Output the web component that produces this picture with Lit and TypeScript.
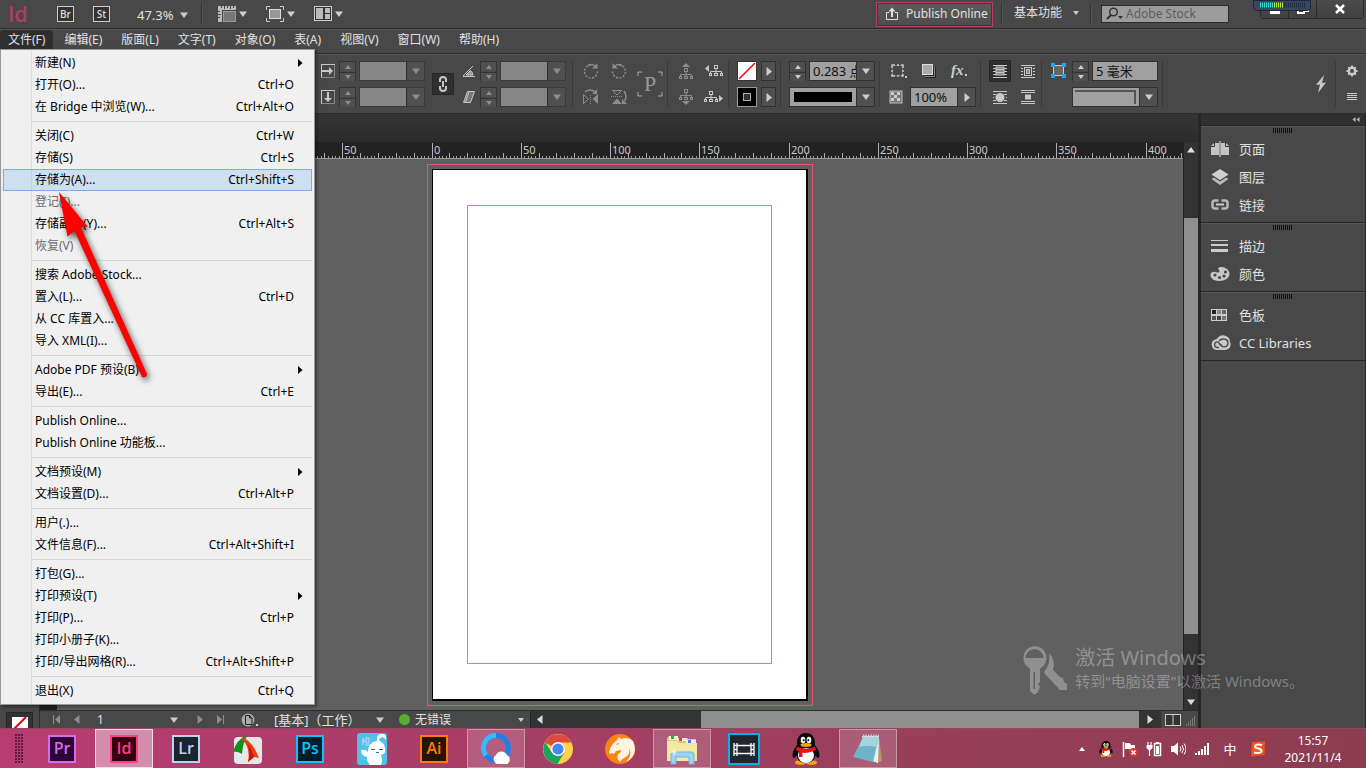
import { LitElement, html, svg, css, nothing, type TemplateResult } from 'lit';
import { customElement } from 'lit/decorators.js';
import { classMap } from 'lit/directives/class-map.js';

type MenuEntry = { label: string; keys?: string; sub?: boolean; off?: boolean; hot?: boolean };

const FILE_MENU: MenuEntry[][] = [
  [
    { label: '新建(N)', sub: true },
    { label: '打开(O)...', keys: 'Ctrl+O' },
    { label: '在 Bridge 中浏览(W)...', keys: 'Ctrl+Alt+O' },
  ],
  [
    { label: '关闭(C)', keys: 'Ctrl+W' },
    { label: '存储(S)', keys: 'Ctrl+S' },
    { label: '存储为(A)...', keys: 'Ctrl+Shift+S', hot: true },
    { label: '登记(I)...', off: true },
    { label: '存储副本(Y)...', keys: 'Ctrl+Alt+S' },
    { label: '恢复(V)', off: true },
  ],
  [
    { label: '搜索 Adobe Stock...' },
    { label: '置入(L)...', keys: 'Ctrl+D' },
    { label: '从 CC 库置入...' },
    { label: '导入 XML(I)...' },
  ],
  [
    { label: 'Adobe PDF 预设(B)', sub: true },
    { label: '导出(E)...', keys: 'Ctrl+E' },
  ],
  [{ label: 'Publish Online...' }, { label: 'Publish Online 功能板...' }],
  [
    { label: '文档预设(M)', sub: true },
    { label: '文档设置(D)...', keys: 'Ctrl+Alt+P' },
  ],
  [
    { label: '用户(.)...' },
    { label: '文件信息(F)...', keys: 'Ctrl+Alt+Shift+I' },
  ],
  [
    { label: '打包(G)...' },
    { label: '打印预设(T)', sub: true },
    { label: '打印(P)...', keys: 'Ctrl+P' },
    { label: '打印小册子(K)...' },
    { label: '打印/导出网格(R)...', keys: 'Ctrl+Alt+Shift+P' },
  ],
  [{ label: '退出(X)', keys: 'Ctrl+Q' }],
];

const MENUS = ['文件(F)', '编辑(E)', '版面(L)', '文字(T)', '对象(O)', '表(A)', '视图(V)', '窗口(W)', '帮助(H)'];

const icon = (w: number, h: number, body: TemplateResult | TemplateResult[]) =>
  html`<svg class="ico" width=${w} height=${h} viewBox="0 0 ${w} ${h}" aria-hidden="true">${body}</svg>`;

const TRI: Record<string, [number, number, string]> = {
  down: [8, 6, 'M0 0.5H8L4 6Z'],
  up: [8, 6, 'M0 5.5H8L4 0Z'],
  right: [6, 9, 'M0.5 0V9L6 4.5Z'],
  left: [6, 9, 'M5.5 0V9L0 4.5Z'],
  smallDown: [6, 4, 'M0 0H6L3 4Z'],
  smallUp: [6, 4, 'M0 4H6L3 0Z'],
};
const tri = (dir: string, color = '#ccc') => {
  const [w, h, d] = TRI[dir];
  return icon(w, h, svg`<path d=${d} fill=${color}/>`);
};

const G = '#c8c8c8';
const D = '#8c8c8c';

const tree = (c: string) => svg`<g fill="none" stroke=${c}><rect x="5.5" y="0.5" width="3" height="3"/><path d="M7 4V9M1.5 9V6.5H12.5V9"/><rect x="0.5" y="8.5" width="2" height="2"/><rect x="5.5" y="8.5" width="3" height="2"/><rect x="11.5" y="8.5" width="2" height="2"/></g>`;

const I = {
  scaleX: icon(16, 16, svg`<rect x="1.5" y="1.5" width="13" height="13" fill="none" stroke=${G} stroke-dasharray="1 1"/><path d="M1.500 2V14M1 1.500H15" stroke=${G}/><path d="M2 8H11" stroke=${G} stroke-width="2"/><path d="M9 4L13 8L9 12Z" fill=${G}/>`),
  scaleY: icon(16, 16, svg`<rect x="1.5" y="1.5" width="13" height="13" fill="none" stroke=${G} stroke-dasharray="1 1"/><path d="M1 1.5H15M1.5 1V15" stroke=${G}/><path d="M8 3V11" stroke=${G} stroke-width="2"/><path d="M4 9L8 13L12 9Z" fill=${G}/>`),
  angle: icon(16, 14, svg`<path d="M2 12L12 2M2 12.5H14" stroke=${G} fill="none"/><path d="M5 11L9.500 6.500A7 7 0 0 1 12 11Z" fill="#999" stroke=${G}/>`),
  shear: icon(16, 14, svg`<path d="M6.500 1.500H13.500L9.500 12.500H2.500Z" fill="#777" stroke=${G}/><path d="M8 1.500L4.500 12.500" stroke=${G}/>`),
  link: icon(10, 16, svg`<path d="M2 6V4A3 3 0 0 1 8 4V6M2 10V12A3 3 0 0 0 8 12V10" fill="none" stroke=${G} stroke-width="2"/><path d="M5 5V11" stroke=${G} stroke-width="2"/>`),
  cw: icon(18, 18, svg`<path d="M9 3A6.500 6.500 0 1 0 15.500 9.500" fill="none" stroke=${D} stroke-width="1.500" stroke-dasharray="2 1.500"/><path d="M6 3.500Q10 1.500 13 4" fill="none" stroke=${D} stroke-width="1.500"/><path d="M15.500 1V6.500H10Z" fill=${D}/>`),
  ccw: icon(18, 18, svg`<path d="M9 3A6.500 6.500 0 1 1 2.500 9.500" fill="none" stroke=${D} stroke-width="1.500" stroke-dasharray="2 1.500"/><path d="M12 3.500Q8 1.500 5 4" fill="none" stroke=${D} stroke-width="1.500"/><path d="M2.500 1V6.500H8Z" fill=${D}/>`),
  flipH: icon(18, 18, svg`<path d="M1.500 6.500V15.500L6.500 11Z" fill="none" stroke=${D}/><path d="M16 6V16L10.500 11Z" fill=${D}/><path d="M8.500 7V17" stroke=${D} stroke-dasharray="1 1"/><path d="M3 4Q8 0 13 4" fill="none" stroke=${D} stroke-width="1.500"/><path d="M15 1V6H10Z" fill=${D}/>`),
  flipV: icon(18, 18, svg`<path d="M2.500 2.500H11.500L7 7Z" fill="none" stroke=${D}/><path d="M2 16H12L7 10.500Z" fill=${D}/><path d="M1 8.500H13" stroke=${D} stroke-dasharray="1 1"/><path d="M14 3Q17.500 8 14.500 13" fill="none" stroke=${D} stroke-width="1.500"/><path d="M12 11V16H17Z" fill=${D}/>`),
  para: icon(26, 26, svg`<path d="M1 5V1H5M21 1H25V5M25 21V25H21M5 25H1V21" fill="none" stroke="#aaa"/><text x="13" y="20" text-anchor="middle" font-family="Liberation Serif, serif" font-size="22" fill="#999">P</text>`),
  treeUp: icon(16, 18, svg`<path d="M4 5L8 1L12 5Z" fill=${D}/><g transform="translate(1 6)">${tree(D)}</g>`),
  treeDown: icon(16, 18, svg`<path d="M4 13L8 17L12 13Z" fill=${D}/><g transform="translate(1 1)">${tree(D)}</g>`),
  treePrev: icon(20, 14, svg`<path d="M5 1V8L1 4.500Z" fill=${G}/><g transform="translate(5 1)">${tree(G)}</g>`),
  treeNext: icon(20, 14, svg`<path d="M15 5V12L19 8.500Z" fill=${G}/><g transform="translate(0 1)">${tree(G)}</g>`),
  none: icon(20, 20, svg`<rect x="0.500" y="0.500" width="19" height="19" fill="#fff" stroke="#333"/><path d="M2 18L18 2" stroke="#e00" stroke-width="1.500"/>`),
  stroke: icon(20, 20, svg`<rect x="0.500" y="0.500" width="19" height="19" fill="#000" stroke="#999"/><rect x="6.500" y="6.500" width="7" height="7" fill="#333" stroke="#aaa"/>`),
  corner: icon(18, 16, svg`<rect x="2.500" y="2.500" width="10" height="10" fill="none" stroke="#777" stroke-width="1"/><path d="M2 5V2H5M7 2H9M11 2H13V5M13 7V9M13 11V13H11M9 13H7M5 13H2V11M2 9V7" fill="none" stroke=${G} stroke-width="1.500"/><rect x="15" y="13" width="2" height="2" fill=${G}/>`),
  shadow: icon(16, 16, svg`<rect x="4" y="4" width="11" height="11" fill="#222"/><path d="M13.500 4V13.500H4" fill="none" stroke="#888"/><rect x="1.500" y="1.500" width="10" height="10" fill="#aaa" stroke="#ddd"/>`),
  fx: icon(18, 16, svg`<text x="1" y="12" font-family="Liberation Serif, serif" font-style="italic" font-weight="bold" font-size="15" fill="#d0d0d0">fx</text><rect x="15" y="11" width="2" height="2" fill=${G}/>`),
  checker: icon(14, 14, svg`<rect x="1" y="1" width="12" height="12" fill="#777" stroke="#bbb"/><path d="M2 2h3v3h-3zM8 2h3v3h-3zM5 5h3v3h-3zM2 8h3v3h-3zM8 8h3v3h-3z" fill="#ccc"/>`),
  wrap1: icon(16, 16, svg`<path d="M1 2.500H15M1 5.500H15M1 8.500H15M1 11.500H15M1 14.500H15" stroke=${G}/><rect x="4" y="4" width="8" height="8" fill="#888" stroke=${G}/><path d="M4 6.500H12M4 9.500H12" stroke=${G}/>`),
  wrap2: icon(16, 16, svg`<path d="M1 2.500H15M1 14.500H15M1 5.500H3M1 8.500H3M1 11.500H3M13 5.500H15M13 8.500H15M13 11.500H15" stroke=${G}/><rect x="4.500" y="4.500" width="7" height="8" fill="none" stroke=${G}/><rect x="6.500" y="6.500" width="3" height="4" fill="#888" stroke=${G}/>`),
  wrap3: icon(16, 16, svg`<path d="M1 2.500H15M1 14.500H15M1 5.500H4M1 8.500H2M1 11.500H4M12 5.500H15M14 8.500H15M12 11.500H15" stroke=${G}/><circle cx="8" cy="8.500" r="4.500" fill=${G}/>`),
  wrap4: icon(16, 16, svg`<path d="M1 1.500H15M1 3.500H15M1 12.500H15M1 14.500H15" stroke=${G}/><rect x="5" y="5.500" width="6" height="5" fill=${G}/>`),
  frame: icon(18, 18, svg`<rect x="3.500" y="3.500" width="10" height="10" fill="#666" stroke=${G}/><path d="M1 1h4v4h-4zM12 1h4v4h-4zM1 12h4v4h-4zM12 12h4v4h-4z" fill="#29a3f0"/>`),
  bolt: icon(12, 20, svg`<path d="M9 1L1 11L5 10.500L3 19L11 8.500L7 9Z" fill=${G}/>`),
  gear: icon(12, 12, svg`<circle cx="6" cy="6" r="3.200" fill="none" stroke=${G} stroke-width="2.400"/><path d="M6 0.500V2M6 10V11.500M0.500 6H2M10 6H11.500M2.200 2.200L3.300 3.300M8.700 8.700L9.800 9.800M9.800 2.200L8.700 3.300M3.300 8.700L2.200 9.800" stroke=${G} stroke-width="2"/>`),
  lines: icon(12, 10, svg`<path d="M1 1.500H11M1 3.500H11M1 5.500H11M1 7.500H11" stroke=${G}/>`),
  rulers: icon(18, 16, svg`<path d="M0 0h18v4h-14v12h-4z" fill="#bbb"/><path d="M3.500 0v2M6.500 0v3M9.500 0v2M12.500 0v3M15.500 0v2M0 5.500h2M0 8.500h3M0 11.500h2" stroke="#444"/><rect x="5.500" y="5.500" width="12" height="10" fill="#777" stroke="#999"/>`),
  screen: icon(18, 16, svg`<rect x="3.500" y="3.500" width="11" height="9" fill="#999" stroke="#ddd"/><path d="M0.500 4V0.500H4M14 0.500H17.500V4M17.500 12V15.500H14M4 15.500H0.500V12" fill="none" stroke="#ccc"/>`),
  arrange: icon(18, 16, svg`<rect x="0.500" y="0.500" width="17" height="14" fill="#333" stroke="#ccc"/><rect x="2" y="2" width="7" height="11" fill="#bbb"/><rect x="11" y="2" width="5" height="5" fill="#bbb"/><rect x="11" y="8" width="5" height="5" fill="#bbb"/>`),
  upload: icon(14, 14, svg`<path d="M4 5.500H1.500V12.500H12.500V5.500H10" fill="none" stroke="#ddd"/><path d="M7 10V3" stroke="#ddd" stroke-width="2"/><path d="M3.500 4.500L7 0.500L10.500 4.500Z" fill="#ddd"/>`),
  search: icon(20, 14, svg`<circle cx="7.500" cy="5" r="3.800" fill="none" stroke="#333" stroke-width="1.500"/><path d="M5 8L1 12" stroke="#333" stroke-width="2"/><path d="M12 9H17L14.500 12Z" fill="#333"/>`),
};

const PANELS: { label: string; glyph: TemplateResult }[][] = [
  [
    { label: '页面', glyph: icon(20, 18, svg`<path d="M1 6L4 3H9V15H1ZM11 3H16L19 6V15H11Z" fill="#c4c4c4"/><path d="M1 6.500H4.500V3M19 6.500H15.500V3" fill="none" stroke="#333"/><path d="M10 1V17" stroke="#eee"/>`) },
    { label: '图层', glyph: icon(20, 18, svg`<path d="M10 1L18.500 6.500L10 12L1.500 6.500Z" fill="#d0d0d0"/><path d="M1.500 11L4 9.500L10 13.500L16 9.500L18.500 11L10 17Z" fill="#b8b8b8"/>`) },
    { label: '链接', glyph: icon(20, 18, svg`<path d="M8.500 4.500H5Q2.500 4.500 2.500 7V10Q2.500 12.500 5 12.500H8.500M11.500 4.500H15Q17.500 4.500 17.500 7V10Q17.500 12.500 15 12.500H11.500" fill="none" stroke="#b8b8b8" stroke-width="2.500"/><path d="M6 8.500H14" stroke="#ccc" stroke-width="2"/>`) },
  ],
  [
    { label: '描边', glyph: icon(20, 18, svg`<path d="M1 3.500H18" stroke="#ccc"/><path d="M1 8H18" stroke="#ccc" stroke-width="2"/><path d="M1 13.500H18" stroke="#ccc" stroke-width="3"/>`) },
    { label: '颜色', glyph: icon(20, 18, svg`<path d="M11 2C17 2 19.500 6 19.500 9C19.500 13 15 16 9 16C4 16 0.500 13 0.500 10C0.500 7 4 6 7 7.500C10 8 10 6 8.500 4.500C7.500 3 9 2 11 2Z" fill="#c8c8c8"/><g fill="#444"><circle cx="5" cy="10" r="1.600"/><circle cx="9.500" cy="12.500" r="1.600"/><circle cx="14" cy="11" r="1.600"/><circle cx="15.500" cy="7" r="1.600"/></g>`) },
  ],
  [
    { label: '色板', glyph: icon(20, 18, svg`<rect x="1" y="3" width="16" height="12" fill="#ccc"/><path d="M2 4h4v4h-4z" fill="#222"/><path d="M7 4h4v4h-4z" fill="#888"/><path d="M12 4h4v4h-4z" fill="#666"/><path d="M2 10h4v4h-4z" fill="#555"/><path d="M7 10h4v4h-4z" fill="#444"/><path d="M12 10h4v4h-4z" fill="#777"/>`) },
    { label: 'CC Libraries', glyph: icon(22, 18, svg`<path d="M7 16A5.500 5.500 0 0 1 4 6C6 5 7 5 8 3.500A7 7 0 0 1 20 8C22 12 19 16 15 16Z" fill="#c8c8c8"/><path d="M13 13L8 8A2.800 2.800 0 1 0 7 13.500H9M9 7C12 3.500 18 5 18 9C18 13 13.500 14 11 11.500L9 9.500" fill="none" stroke="#444" stroke-width="1.300"/>`) },
  ],
];

const adobe = (t: string, edge: string, bg: string) =>
  icon(30, 30, svg`<rect x="2" y="2" width="26" height="26" fill=${bg} stroke=${edge} stroke-width="2"/><text x="15" y="20" text-anchor="middle" font-family="Open Sans, sans-serif" font-weight="600" font-size="16" fill=${edge}>${t}</text>`);

const qq = (s: number) => html`<svg class="ico" width=${s} height=${s} viewBox="0 0 32 32" aria-hidden="true">
  <ellipse cx="10.500" cy="29.500" rx="5.500" ry="2.300" fill="#f6a800"/><ellipse cx="21.500" cy="29.500" rx="5.500" ry="2.300" fill="#f6a800"/>
  <path d="M16 0C22 0 25.500 4.500 25 12C28 16 31 22 28.500 25C27 25 26 23 25.500 22C25 27 21 30 16 30C11 30 7 27 6.500 22C6 23 5 25 3.500 25C1 22 4 16 7 12C6.500 4.500 10 0 16 0Z" fill="#0b0b0b"/>
  <ellipse cx="16" cy="22.500" rx="8" ry="7.500" fill="#fff"/><ellipse cx="13" cy="7" rx="2.300" ry="3.200" fill="#fff"/><ellipse cx="19" cy="7" rx="2.300" ry="3.200" fill="#fff"/><circle cx="13.700" cy="7.300" r="1"/><circle cx="18.300" cy="7.300" r="1"/>
  <ellipse cx="16" cy="12" rx="5.500" ry="1.900" fill="#f6a800"/><path d="M7 13.500Q16 18 25 13.500L26 17Q16 21 12.500 19.500V24H9V18.500L6 17Z" fill="#e8141c"/></svg>`;

const APPS: { name: string; state?: string; glyph: TemplateResult }[] = [
  { name: 'Premiere Pro', glyph: adobe('Pr', '#d869f5', '#2a0634') },
  { name: 'InDesign', state: 'active', glyph: adobe('Id', '#ff3c8e', '#34000f') },
  { name: 'Lightroom', glyph: adobe('Lr', '#b4d4f0', '#1c2430') },
  { name: 'FastStone', glyph: icon(30, 32, svg`<rect x="1" y="4" width="28" height="27" rx="4" fill="#e6e6e6"/><path d="M0 19Q3 7 15 1L13 5Q10 10 9 21Q5 18 0 19Z" fill="#149018"/><path d="M8 5Q18 5 26 25L21 24L15 29Q18 14 8 5Z" fill="#ee3c18"/><path d="M8 5Q20 14 15 29L21 24L17 14Z" fill="#d01208"/>`) },
  { name: 'Photoshop', glyph: adobe('Ps', '#00c8ff', '#001d2c') },
  { name: 'Pet', glyph: icon(32, 34, svg`<rect x="1" y="1" width="30" height="32" rx="3" fill="#52c0e8"/><path d="M21 9Q20 2 26 2Q31 2 30 8Q28 4 24 6Q23 7 23.500 9Q29 11 29 17Q30 22 25 23Q27 29 25 33H14Q10 29 11 25Q5 24 5 18Q9 17 12 20Q12 10 21 9Z" fill="#fff"/><path d="M15 17.500h4M23 17.500h4M20 20.500h3" stroke="#46a" fill="none"/><path d="M7 6v7M10 6v5h3V6zM6 9h3M9 13h5" stroke="#cdf" fill="none"/>`) },
  { name: 'Illustrator', glyph: adobe('Ai', '#ff7c00', '#261300') },
  { name: 'QQ Browser', state: 'open', glyph: icon(32, 34, svg`<circle cx="16" cy="16" r="12.500" fill="none" stroke="#1c80ea" stroke-width="5"/><path d="M6 23.500A12.500 12.500 0 0 1 16 3.500" fill="none" stroke="#38b8ff" stroke-width="5"/><path d="M17 32A5 5 0 0 1 16 23A6 6 0 0 1 27 23A5 5 0 0 1 27 32Z" fill="#fff"/>`) },
  { name: 'Chrome', glyph: icon(32, 32, svg`<circle cx="16" cy="16" r="15" fill="#fdd14a"/><path d="M16 16L2.600 9.500A15 15 0 0 1 29.500 9.500H16Z" fill="#dd4b3e"/><path d="M3 9A15 15 0 0 0 15.500 31L22 20L16 16L9.500 19Z" fill="#1aa260"/><circle cx="16" cy="16" r="7" fill="#fff"/><circle cx="16" cy="16" r="5.600" fill="#4a86f0"/>`) },
  { name: 'UC Browser', glyph: icon(32, 32, svg`<circle cx="16" cy="16" r="15" fill="#f98412"/><path d="M5 19Q7 11 13 7L15 4L17 6Q24 3 29 8Q31 12 31 17Q30 25 22 29Q29 21 25 15Q27 22 20 25Q16 27 17 29Q12 27 14 21Q17 20 17 17L12 18L10 21L8 20L6 21Z" fill="#fff3e2"/><path d="M12 11L15 10L14 12Z" fill="#f98412"/>`) },
  { name: 'File Explorer', state: 'open', glyph: icon(34, 32, svg`<path d="M2 5L4 3H12L13 5H22L23 6H31V28H2Z" fill="#d8c878"/><path d="M4 3h9v4h-9zM12 5h10v3h-10zM21 7h10v3h-10z" fill="#f4f0d8"/><path d="M6 3h3v3h-3z" fill="#28b040"/><path d="M14 5h3v3h-3z" fill="#d84030"/><path d="M23 7h3v3h-3z" fill="#3a86d8"/><path d="M2 8H12L14 10H32V28H2Z" fill="#f4e8a0"/><path d="M6 31V22Q6 19 9 19H26Q29 19 29 22V31H24V24H11V31Z" fill="#9ad4f0" stroke="#70b4dc"/><path d="M9 16v6M6 19h6" stroke="#fff"/>`) },
  { name: 'Media', glyph: icon(32, 32, svg`<rect x="1" y="1" width="30" height="30" fill="#20262c" stroke="#08b0e4" stroke-width="2"/><path d="M6 10V23M9 10V23M23 10V23M26 10V23M6 12.500h3M6 16.500h3M6 20.500h3M23 12.500h3M23 16.500h3M23 20.500h3M9 12.500H23M9 20.500H23" stroke="#fff" stroke-width="1.300"/>`) },
  { name: 'QQ', glyph: qq(32) },
  { name: 'Notepad', state: 'open', glyph: icon(34, 32, svg`<path d="M28 4L31 28L25 30Z" fill="#b89a68"/><path d="M11 3H28L27 30L21 28Z" fill="#e8f0f0"/><path d="M12 4H28L22 29L2 24Z" fill="#6cb4c6"/><path d="M12 4H28L25 14Q16 12 8 14Z" fill="#a4d4de"/><path d="M12 3H28" stroke="#ccc" stroke-width="3" stroke-dasharray="1.500 1"/>`) },
];

const ORIGIN = 375;
const STEP = 17.85;

@customElement('app-root')
export class AppRoot extends LitElement {
  static styles = css`
    :host { display: flex; flex-direction: column; height: 100vh; overflow: hidden; position: relative; background: #484848; color: #e0e0e0; font: 12px/16px 'Noto Sans', 'Noto Sans CJK SC', sans-serif; }
    * { box-sizing: border-box; }
    button, input, select { font: inherit; color: inherit; margin: 0; padding: 0; border: 0; background: none; border-radius: 0; outline: 0; }
    select { appearance: none; }
    .ico { display: block; flex: none; }
    .row { display: flex; align-items: center; }
    .grow { flex: 1; }
    .sel { display: inline-grid; align-items: center; }
    .sel > * { grid-area: 1 / 1; }
    .sel > .ico { justify-self: end; pointer-events: none; }
    .vr { width: 2px; align-self: stretch; background: #333; border-right: 1px solid #555; }

    .title { height: 29px; flex: none; border-bottom: 1px solid #2c2c2c; padding-left: 8px; }
    .brand { width: 49px; color: #b23c6e; font: 600 21px/28px 'Open Sans', sans-serif; }
    .mini { width: 17px; height: 16px; border: 1px solid #ccc; background: #333; color: #ddd; font: 600 10px/14px 'Open Sans', sans-serif; text-align: center; margin-right: 19px; }
    .zoom { width: 51px; margin: 2px 13px 0 8px; font-size: 13px; }
    .title > .vr { margin: 4px 0; }
    .drop { display: flex; align-items: center; gap: 3px; height: 20px; }
    .views { display: flex; gap: 19px; margin-left: 15px; }
    .publish { display: flex; align-items: center; gap: 7px; width: 117px; height: 25px; padding-left: 8px; border: 1px solid #b8406e; background: linear-gradient(#5c5c5c, #4c4c4c); box-shadow: inset 0 0 0 1px #3a3a3a; margin-right: 8px; white-space: nowrap; }
    .space { width: 65px; margin: 0 11px 2px 11px; }
    .find { display: flex; align-items: center; width: 128px; height: 18px; margin: 0 31px 1px 9px; border: 1px solid #2c2c2c; background: #9c9c9c; padding-left: 4px; }
    .find input { width: 100%; min-width: 0; color: #333; }
    .find input::placeholder { color: #5c5c5c; opacity: 1; }
    .wins { display: flex; align-self: flex-start; height: 19px; margin-right: 2px; border: 1px solid #2a2a2a; border-top: 0; border-radius: 0 0 4px 4px; }
    .wins button { width: 28px; display: grid; place-items: center; border-right: 1px solid #2a2a2a; background: linear-gradient(#4c4c4c, #404040); }
    .wins button:last-child { width: 46px; border: 0; }
    .meter { position: absolute; top: 0; right: 55px; width: 58px; height: 11px; border: 1px solid #20283c; border-radius: 0 0 4px 4px; background: #3a4560; padding: 1px 6px; }

    .menubar { display: flex; gap: 3px; height: 24px; flex: none; border-top: 1px solid #585858; padding-bottom: 3px; }
    .menubar button { padding: 0 8px; height: 20px; }
    .menubar button.on { background: #2e2e2e; border-radius: 3px 3px 0 0; }

    .control { display: flex; align-items: stretch; height: 61px; flex: none; border-top: 1px solid #2c2c2c; border-bottom: 1px solid #2c2c2c; box-shadow: inset 0 1px #585858; padding: 7px 2px 6px 320px; }
    .cg { display: flex; align-items: center; padding-right: 4px; }
    .cg:first-child { padding-right: 6px; }
    .vr + .cg, .grow + .cg { padding-left: 8px; }
    .control > .vr { width: 1px; border: 0; background: #3a3a3a; }
    .two { display: grid; grid-template-rows: 20px 20px; row-gap: 6px; }
    .line { display: flex; align-items: center; }
    .g3 { gap: 3px; }
    .g4 { gap: 4px; }
    .g6 { gap: 6px; }
    .g8 { gap: 8px; }
    .cell { display: grid; place-items: center; height: 20px; }
    .w16 { width: 16px; }
    .w18 { width: 18px; }
    .w20 { width: 20px; }
    .w22 { width: 22px; }
    .spin { display: grid; grid-template-rows: 10px 10px; width: 17px; border: 1px solid #333; height: 20px; }
    .spin button { display: grid; place-items: center; height: 9px; background: #505050; }
    .spin button + button { border-top: 1px solid #333; }
    .field { display: flex; width: 66px; height: 20px; border: 1px solid #303030; background: #a0a0a0; color: #111; }
    .field.dim { background: #868686; border-color: #3a3a3a; }
    .field input { flex: 1; width: 0; min-width: 0; padding-left: 3px; font-size: 13px; }
    .field button { width: 18px; display: grid; place-items: center; background: #505050; border-left: 1px solid #303030; }
    .wide { width: 86px; }
    .sample { flex: 1; margin: 4px; background: #000; }
    .bend { flex: 1; margin: 2px 3px 2px 2px; border-top: 2px solid #555; border-right: 2px solid #555; }
    .tog { display: grid; place-items: center; width: 22px; height: 22px; background: #303030; border: 1px solid #262626; }
    .gap7 { gap: 7px; }
    .play { width: 15px; height: 20px; display: grid; place-items: center; border: 1px solid #303030; background: #505050; }

    .work { display: flex; flex: 1; min-height: 0; }
    .tools { width: 40px; flex: none; display: flex; flex-direction: column; justify-content: flex-end; border-right: 1px solid #2c2c2c; overflow: hidden; padding: 0 6px; }
    .fill { height: 16px; width: 27px; padding: 4px 5px 0; background: #333; border: 1px solid #262626; border-bottom: 0; overflow: hidden; }
    .doc { display: flex; flex-direction: column; flex: 1; min-width: 0; }
    .tabs { height: 28px; flex: none; background: linear-gradient(#353535, #2b2b2b); }
    .view { flex: 1; min-height: 0; display: grid; grid-template: 17px minmax(0, 1fr) / 17px minmax(0, 1fr) 15px; }
    .ruler { background: #222; overflow: hidden; }
    .ruler svg { display: block; width: 100%; height: 100%; }
    .canvas { background: #606060; display: grid; place-items: center; overflow: hidden; }
    .bleed { border: 1px solid #f05468; padding: 4px; }
    .page { width: 376px; height: 532px; background: #fff; border: 1px solid #000; border-width: 1px 2px 2px 1px; padding: 35px 34px; }
    .margin { height: 100%; border: 1px solid #cc7eb4; }
    .vbar { display: flex; flex-direction: column; grid-row: 1 / 3; grid-column: 3; background: #333; border-left: 1px solid #222; }
    .vbar button, .hbar button { display: grid; place-items: center; flex: none; }
    .vbar button { height: 16px; }
    .gap { background: #333; }
    .thumb { background: #8f8f8f; }
    .f60 { flex: 60; }
    .f415 { flex: 415; }
    .f152 { flex: 152; }
    .f438 { flex: 438; }

    .status { display: flex; align-items: center; height: 18px; flex: none; border-top: 1px solid #2c2c2c; padding-left: 7px; }
    .nav { display: grid; place-items: center; width: 20px; }
    .pageno { width: 91px; padding-left: 10px; margin-right: 12px; }
    .note { display: flex; width: 27px; margin: 0 6px 0 11px; }
    .profile { width: 110px; margin-right: 15px; }
    .profile select { font-size: 13px; }
    .dot { width: 11px; height: 11px; border-radius: 50%; background: #58ae2c; margin-right: 5px; }
    .errs { width: 109px; margin-right: 6px; }
    .hbar { display: flex; flex: 1; align-self: stretch; background: #333; border-left: 1px solid #222; }
    .hbar button { width: 18px; }
    .hbar button:last-child { width: 22px; }
    .ends { display: flex; align-items: center; gap: 5px; padding: 0 2px 0 4px; }

    .panels { width: 168px; flex: none; border: solid #262626; border-width: 0 1px 0 3px; }
    .collapse { height: 12px; display: flex; align-items: center; justify-content: flex-end; padding-right: 5px; background: #303030; border-bottom: 1px solid #262626; }
    .pg { border-top: 1px solid #585858; border-bottom: 1px solid #262626; padding: 1px 0 3px; }
    .grip { width: 20px; height: 5px; margin: 0 auto 2px; background: repeating-linear-gradient(90deg, #111 0 1px, #484848 1px 2px); }
    .pi { display: flex; align-items: center; width: 100%; height: 28px; gap: 9px; padding-left: 9px; font-size: 13px; text-align: left; }
    .pi > span { width: 20px; }

    .taskbar { display: flex; height: 40px; flex: none; align-items: stretch; background: linear-gradient(90deg, #b83c72, #a03f61 50%, #8c3c50); border-top: 1px solid #99445f; color: #fff; }
    .tgrip { width: 8px; margin: 5px 10px 4px 15px; background: radial-gradient(circle at 1px 1px, #5c1c38 1px, transparent 1px) 0 0 / 3px 3px; }
    .apps { display: flex; gap: 4px; }
    .apps button { width: 58px; display: grid; place-items: center; border: 1px solid transparent; }
    .apps .open { background: rgba(255, 255, 255, 0.16); border-color: rgba(255, 255, 255, 0.35); }
    .apps .active { background: rgba(255, 255, 255, 0.42); border-color: #f4dce6; }
    .tray { display: flex; align-items: center; gap: 8px; margin-right: 18px; }
    .tray button { display: grid; place-items: center; width: 16px; height: 24px; }
    .tray .ime { font-size: 13px; margin: 0 4px; }
    .clock { width: 70px; text-align: center; margin-left: 4px; line-height: 17px; }

    .menu { position: absolute; top: 49px; left: 0; width: 315px; padding: 2px; border: 1px solid #989898; background: linear-gradient(90deg, transparent 30px, #dcdcdc 30px 31px, transparent 31px) #f0f0f0; color: #000; box-shadow: 2px 2px 3px rgba(0, 0, 0, 0.4); }
    .menu hr { height: 1px; border: 0; margin: 3px 0 3px 28px; background: #d7d7d7; }
    .mi { display: flex; justify-content: space-between; align-items: center; width: 100%; height: 22px; padding: 0 17px 0 31px; border: 1px solid transparent; white-space: nowrap; }
    .mi.off { color: #6d6d6d; }
    .mi.hot { background: rgba(120, 180, 240, 0.28); border-color: #78aee5; }
    .mi .ico { margin-right: -9px; }

    .pointer { position: absolute; left: 50px; top: 185px; filter: drop-shadow(2px 3px 3px rgba(0, 0, 0, 0.65)); pointer-events: none; }
    .mark { position: absolute; right: 62px; bottom: 71px; display: flex; gap: 6px; color: rgba(255, 255, 255, 0.33); pointer-events: none; white-space: nowrap; }
    .mark p { margin: 0; }
    .mark .big { font-size: 20px; line-height: 26px; }
    .mark .small { font-size: 15px; line-height: 20px; }
  `;

  private sep = () => html`<span class="vr"></span>`;

  private spin(label: string, c = '#ccc') {
    return html`<span class="spin"><button aria-label="${label} +">${tri('smallUp', c)}</button><button aria-label="${label} -">${tri('smallDown', c)}</button></span>`;
  }

  private field(label: string, value = '', dim = false, arrow = 'down') {
    return html`<span class=${classMap({ field: true, dim })}><input aria-label=${label} .value=${value} ?disabled=${dim}>${arrow ? html`<button aria-label="${label} ▾">${tri(arrow, dim ? '#8c8c8c' : '#ccc')}</button>` : nothing}</span>`;
  }

  private cell(glyph: TemplateResult, label: string, cls = 'w20') {
    return html`<button class="cell ${cls}" aria-label=${label}>${glyph}</button>`;
  }

  private hRuler() {
    const out: TemplateResult[] = [];
    for (let i = -21; i <= 44; i++) {
      const x = Math.floor(ORIGIN + i * STEP) + 0.5;
      const major = i % 5 === 0;
      out.push(svg`<path d="M${x} ${major ? 1 : 11}V16" stroke="#b0b0b0"/>`);
      for (let k = 1; k < 5; k++) out.push(svg`<path d="M${Math.floor(ORIGIN + (i + k / 5) * STEP) + 0.5} 14V16" stroke="#9a9a9a"/>`);
      if (major) out.push(svg`<text x=${x + 1.5} y="12" font-size="11" fill="#c8c8c8">${Math.abs(i * 10)}</text>`);
    }
    return html`<svg aria-hidden="true">${out}<path d="M0 16.500H2000" stroke="#999"/></svg>`;
  }

  private titleBar() {
    return html`<header class="title row">
      <span class="brand">Id</span>
      <button class="mini">Br</button><button class="mini">St</button>
      <label class="sel zoom"><select aria-label="缩放"><option>47.3%</option></select>${tri('down')}</label>
      ${this.sep()}
      <div class="views">
        <button class="drop" aria-label="视图选项">${I.rulers}${tri('down')}</button>
        <button class="drop" aria-label="屏幕模式">${I.screen}${tri('down')}</button>
        <button class="drop" aria-label="排列文档">${I.arrange}${tri('down')}</button>
      </div>
      <span class="grow"></span>
      <button class="publish">${I.upload}Publish Online</button>
      ${this.sep()}
      <label class="sel space"><select aria-label="工作区"><option>基本功能</option></select>${tri('smallDown')}</label>
      ${this.sep()}
      <label class="find">${I.search}<input aria-label="Adobe Stock" placeholder="Adobe Stock"></label>
      <div class="wins">
        <button aria-label="最小化">${icon(12, 14, svg`<rect x="1" y="9" width="10" height="3" fill="#fff"/>`)}</button>
        <button aria-label="还原">${icon(14, 14, svg`<path d="M5 3h7v6h-3M2 6h6v5h-6z" fill="none" stroke="#fff" stroke-width="2"/>`)}</button>
        <button aria-label="关闭">${icon(12, 12, svg`<path d="M2 2L10 10M10 2L2 10" stroke="#fff" stroke-width="2.500"/>`)}</button>
      </div>
      <div class="meter">${icon(48, 6, svg`<path d="M0 3H14" stroke="#30e0d0" stroke-width="5" stroke-dasharray="1 1"/><path d="M14 3H24" stroke="#c0e830" stroke-width="5" stroke-dasharray="1 1"/><path d="M24 3H46" stroke="#222c44" stroke-width="5" stroke-dasharray="1 1"/>`)}</div>
    </header>`;
  }

  private controlBar() {
    return html`<section class="control">
      <div class="cg gap7">
        <div class="two">
          <div class="line g3">${this.cell(I.scaleX, 'X 缩放', 'w16')}${this.spin('X 缩放', '#8c8c8c')}${this.field('X 缩放百分比', '', true)}</div>
          <div class="line g3">${this.cell(I.scaleY, 'Y 缩放', 'w16')}${this.spin('Y 缩放', '#8c8c8c')}${this.field('Y 缩放百分比', '', true)}</div>
        </div>
        <button class="tog" aria-label="约束缩放比例">${I.link}</button>
        <div class="two">
          <div class="line g3">${this.cell(I.angle, '旋转', 'w16')}${this.spin('旋转', '#8c8c8c')}${this.field('旋转角度', '', true)}</div>
          <div class="line g3">${this.cell(I.shear, '切变', 'w16')}${this.spin('切变', '#8c8c8c')}${this.field('切变角度', '', true)}</div>
        </div>
      </div>${this.sep()}
      <div class="cg g8">
        <div class="two">
          <div class="line g8">${this.cell(I.cw, '顺时针旋转')}${this.cell(I.ccw, '逆时针旋转')}</div>
          <div class="line g8">${this.cell(I.flipH, '水平翻转')}${this.cell(I.flipV, '垂直翻转')}</div>
        </div>${I.para}
      </div>${this.sep()}
      <div class="cg"><div class="two">
        <div class="line g8">${this.cell(I.treeUp, '选择容器')}${this.cell(I.treePrev, '上一对象', 'w20')}</div>
        <div class="line g8">${this.cell(I.treeDown, '选择内容')}${this.cell(I.treeNext, '下一对象', 'w20')}</div>
      </div></div>${this.sep()}
      <div class="cg"><div class="two">
        <div class="line g4">${this.cell(I.none, '填色')}<button class="play" aria-label="填色选项">${tri('right')}</button></div>
        <div class="line g4">${this.cell(I.stroke, '描边')}<button class="play" aria-label="描边选项">${tri('right')}</button></div>
      </div></div>${this.sep()}
      <div class="cg"><div class="two">
        <div class="line g3">${this.spin('粗细')}${this.field('描边粗细', '0.283 点')}</div>
        <span class="field wide"><span class="sample"></span><button aria-label="描边类型">${tri('down')}</button></span>
      </div></div>${this.sep()}
      <div class="cg"><div class="two">
        <div class="line g8">${this.cell(I.corner, '角选项', 'w22')}${this.cell(I.shadow, '投影', 'w22')}${this.cell(I.fx, '效果', 'w22')}</div>
        <div class="line g6">${this.cell(I.checker, '不透明度', 'w16')}${this.field('不透明度百分比', '100%', false, 'right')}</div>
      </div></div>${this.sep()}
      <div class="cg"><div class="two">
        <div class="line g8"><button class="tog" aria-label="无文本绕排">${I.wrap1}</button>${this.cell(I.wrap2, '定界框绕排', 'w18')}</div>
        <div class="line g8">${this.cell(I.wrap3, '对象形状绕排', 'w22')}${this.cell(I.wrap4, '上下型绕排', 'w18')}</div>
      </div></div>${this.sep()}
      <div class="cg g4">
        <div class="two">${this.cell(I.frame, '角', 'w18')}</div>
        <div class="two">
          <div class="line g3">${this.spin('角大小')}${this.field('角大小值', '5 毫米', false, '')}</div>
          <span class="field wide"><span class="bend"></span><button aria-label="角形状">${tri('down')}</button></span>
        </div>
      </div>${this.sep()}
      <span class="grow"></span>
      <div class="cg">${this.cell(I.bolt, '快速应用', 'w20')}</div>${this.sep()}
      <div class="cg"><div class="two">${this.cell(I.gear, '设置', 'w16')}${this.cell(I.lines, '面板菜单', 'w16')}</div></div>
    </section>`;
  }

  private statusBar() {
    return html`<footer class="status">
      <button class="nav" aria-label="第一页">${icon(8, 9, svg`<path d="M0.500 0V9" stroke=${D}/><path d="M7 0V9L2 4.500Z" fill=${D}/>`)}</button>
      <button class="nav" aria-label="上一页">${tri('left', D)}</button>
      <label class="sel pageno"><select aria-label="页码"><option>1</option></select>${tri('down')}</label>
      <button class="nav" aria-label="下一页">${tri('right', D)}</button>
      <button class="nav" aria-label="最后一页">${icon(8, 9, svg`<path d="M7.500 0V9" stroke=${D}/><path d="M1 0V9L6 4.500Z" fill=${D}/>`)}</button>
      <button class="note" aria-label="打开文件">${icon(18, 14, svg`<circle cx="7" cy="7" r="6.500" fill="#aaa"/><path d="M4.500 2.500H8.500L11 5V11.500H4.500Z" fill="#aaa" stroke="#222"/><path d="M8.500 2.500V5H11" fill="none" stroke="#222"/><rect x="15" y="11" width="2" height="2" fill="#ccc"/>`)}</button>
      <label class="sel profile"><select aria-label="印前检查配置"><option>[基本]（工作）</option></select>${tri('down')}</label>
      <span class="dot"></span>
      <label class="sel errs"><select aria-label="印前检查"><option>无错误</option></select>${tri('smallDown')}</label>
      <div class="hbar">
        <button aria-label="向左滚动">${tri('left', '#ddd')}</button>
        <span class="gap f152"></span><span class="thumb f438"></span>
        <button aria-label="向右滚动">${tri('right', '#ddd')}</button>
      </div>
      <div class="ends">${icon(16, 12, svg`<rect x="0.500" y="0.500" width="15" height="11" fill="#333" stroke="#ccc"/><path d="M8 0V12" stroke="#ccc"/>`)}${icon(10, 12, svg`<path d="M0 11h10M2 9h8M4 7h6M6 5h4M8 3h2" stroke="#aaa" stroke-dasharray="1 1"/>`)}</div>
    </footer>`;
  }

  private workspace() {
    return html`<main class="work">
      <aside class="tools"><span class="fill">${icon(16, 16, svg`<rect width="16" height="16" fill="#fff"/><path d="M0 14L14 0" stroke="#e00" stroke-width="2"/>`)}</span></aside>
      <div class="doc">
        <div class="tabs"></div>
        <div class="view">
          <div class="ruler"></div>
          <div class="ruler">${this.hRuler()}</div>
          <div class="vbar">
            <button aria-label="向上滚动">${tri('up', '#ddd')}</button>
            <span class="gap f60"></span><span class="thumb f415"></span><span class="gap f60"></span>
            <button aria-label="向下滚动">${tri('down', '#ddd')}</button>
          </div>
          <div class="ruler"></div>
          <div class="canvas"><div class="bleed"><div class="page"><div class="margin"></div></div></div></div>
        </div>
        ${this.statusBar()}
      </div>
      <aside class="panels">
        <div class="collapse">${icon(8, 5, svg`<path d="M3.500 0V5L0.500 2.500ZM7.500 0V5L4.500 2.500Z" fill="#bbb"/>`)}</div>
        ${PANELS.map((g) => html`<div class="pg"><div class="grip"></div>${g.map((p) => html`<button class="pi"><span>${p.glyph}</span>${p.label}</button>`)}</div>`)}
      </aside>
    </main>`;
  }

  private taskbar() {
    return html`<footer class="taskbar">
      <span class="tgrip"></span>
      <div class="apps">${APPS.map((a) => html`<button class=${a.state ?? ''} aria-label=${a.name}>${a.glyph}</button>`)}</div>
      <span class="grow"></span>
      <div class="tray">
        <button aria-label="显示隐藏的图标">${tri('smallUp', '#fff')}</button>
        <button aria-label="QQ">${qq(16)}</button>
        <button aria-label="操作中心">${icon(16, 16, svg`<path d="M1.500 1V16" stroke="#fff" stroke-width="1.500"/><path d="M3 2H8L9 4H13V9H8L7 8H3Z" fill="#fff"/><circle cx="11.500" cy="11.500" r="4.500" fill="#e03428"/><path d="M9.500 9.500L13.500 13.500M13.500 9.500L9.500 13.500" stroke="#fff" stroke-width="1.500"/>`)}</button>
        <button aria-label="电源">${icon(16, 16, svg`<path d="M2 1V4M5 1V4M3.500 8V15" stroke="#fff" stroke-width="1.200"/><path d="M0.500 4H6.500V7L4.500 9H2.500L0.500 7Z" fill="#fff"/><rect x="8.500" y="2.500" width="6" height="12" fill="none" stroke="#fff" stroke-width="1.500"/><rect x="10" y="1" width="3" height="2" fill="#fff"/><rect x="10" y="5" width="3" height="8" fill="#fff"/>`)}</button>
        <button aria-label="音量">${icon(16, 16, svg`<path d="M1 5H4L8 1.500V14.500L4 11H1Z" fill="#fff"/><path d="M10 5.500Q12 8 10 10.500M12 4Q15 8 12 12M14 2.500Q18 8 14 13.500" fill="none" stroke="#fff"/>`)}</button>
        <button aria-label="网络">${icon(16, 16, svg`<path d="M1 12h2v2h-2zM4 10h2v4h-2zM7 8h2v6h-2zM10 5h2v9h-2zM13 2h2v12h-2z" fill="#fff"/>`)}</button>
        <button class="ime">中</button>
        <button aria-label="搜狗输入法">${icon(16, 16, svg`<path d="M2 1L15 0.500L14.500 14L1 15.500Z" fill="#f4521c"/><path d="M12 4Q5 2.500 5 5.500Q5 7 8.500 7.500Q12 8.500 11.500 10.500Q10 13 4 11.500" fill="none" stroke="#fff" stroke-width="2"/>`)}</button>
        <time class="clock">15:57<br>2021/11/4</time>
      </div>
    </footer>`;
  }

  private fileMenu() {
    return html`<nav class="menu" aria-label="文件">
      ${FILE_MENU.map((group, n) => html`${n ? html`<hr>` : nothing}${group.map(
        (m) => html`<button class=${classMap({ mi: true, off: !!m.off, hot: !!m.hot })} ?disabled=${m.off}><span>${m.label}</span>${m.sub ? icon(5, 8, svg`<path d="M0 0V8L4.500 4Z" fill="#000"/>`) : html`<span>${m.keys ?? ''}</span>`}</button>`,
      )}`)}
    </nav>`;
  }

  render() {
    return html`
      ${this.titleBar()}
      <nav class="menubar">${MENUS.map((m, i) => html`<button class=${i ? '' : 'on'}>${m}</button>`)}</nav>
      ${this.controlBar()} ${this.workspace()} ${this.taskbar()} ${this.fileMenu()}
      <svg class="pointer" width="110" height="205" aria-hidden="true"><path d="M9 7L38 42L30.500 41.500L97 189Q97 193 92 192L24.500 46L17.500 51.500Z" fill="#fe0000"/></svg>
      <div class="mark">
        ${icon(48, 52, svg`<g fill="rgba(255,255,255,.3)"><path fill-rule="evenodd" d="M13.500 1A12 12 0 0 1 19 23.700V37L17 39L19 42L17 47L13.500 50L9 46V23.700A12 12 0 0 1 13.500 1ZM4.500 13H22.500A9 9 0 0 0 4.500 13ZM12.500 27V44H14V27Z"/><path d="M28 8Q35 15 32 25L39 32L42 33L43 37L46 39V45H39L24 29L23 27Q30 19 28 8Z"/></g>`)}
        <div><p class="big">激活 Windows</p><p class="small">转到“电脑设置”以激活 Windows。</p></div>
      </div>`;
  }
}
